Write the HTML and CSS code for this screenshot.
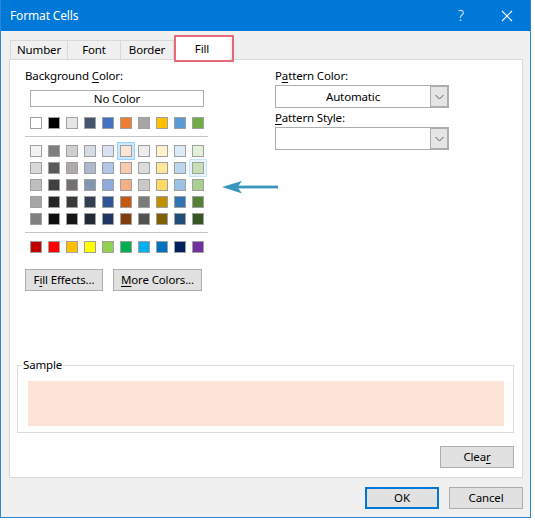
FILE: index.html
```html
<!DOCTYPE html>
<html lang="en">
<head>
<meta charset="utf-8">
<title>Format Cells</title>
<link rel="stylesheet" href="styles.css">
</head>
<body>
<div class="window">
  <div class="titlebar">
    <span class="title">Format Cells</span>
    <span class="cap-btn help">?</span>
    <span class="cap-btn">
      <svg width="12" height="12" viewBox="0 0 12 12"><path d="M1 1 L11 11 M11 1 L1 11" stroke="#fff" stroke-width="1.1" fill="none"/></svg>
    </span>
  </div>
  <div class="body">
    <div class="tabs">
      <div class="tab t-number">Number</div>
      <div class="tab t-font">Font</div>
      <div class="tab t-border">Border</div>
      <div class="tab sel">Fill</div>
    </div>
    <div class="panel">
      <div class="top">
        <div class="left">
          <div class="label">Background <u>C</u>olor:</div>
          <div class="nocolor">No Color</div>
          <div class="swrow first">
            <span class="sw" style="background:#ffffff"></span>
            <span class="sw" style="background:#000000"></span>
            <span class="sw" style="background:#e7e6e6"></span>
            <span class="sw" style="background:#44546a"></span>
            <span class="sw" style="background:#4472c4"></span>
            <span class="sw" style="background:#ed7d31"></span>
            <span class="sw" style="background:#a5a5a5"></span>
            <span class="sw" style="background:#ffc000"></span>
            <span class="sw" style="background:#5b9bd5"></span>
            <span class="sw" style="background:#70ad47"></span>
          </div>
          <div class="sep"></div>
          <div class="swrow tints">
            <span class="sw" style="background:#f2f2f2"></span>
            <span class="sw" style="background:#7f7f7f"></span>
            <span class="sw" style="background:#d0cece"></span>
            <span class="sw" style="background:#d6dce4"></span>
            <span class="sw" style="background:#d9e1f2"></span>
            <span class="sw selected" style="background:#fce4d6"></span>
            <span class="sw" style="background:#ededed"></span>
            <span class="sw" style="background:#fff2cc"></span>
            <span class="sw" style="background:#ddebf7"></span>
            <span class="sw" style="background:#e2efda"></span>

            <span class="sw" style="background:#d9d9d9"></span>
            <span class="sw" style="background:#595959"></span>
            <span class="sw" style="background:#aeaaaa"></span>
            <span class="sw" style="background:#adb9ca"></span>
            <span class="sw" style="background:#b4c6e7"></span>
            <span class="sw" style="background:#f8cbad"></span>
            <span class="sw" style="background:#dbdbdb"></span>
            <span class="sw" style="background:#ffe699"></span>
            <span class="sw" style="background:#bdd7ee"></span>
            <span class="sw hover" style="background:#c6e0b4"></span>

            <span class="sw" style="background:#bfbfbf"></span>
            <span class="sw" style="background:#404040"></span>
            <span class="sw" style="background:#767171"></span>
            <span class="sw" style="background:#8497b0"></span>
            <span class="sw" style="background:#8ea9db"></span>
            <span class="sw" style="background:#f4b084"></span>
            <span class="sw" style="background:#c9c9c9"></span>
            <span class="sw" style="background:#ffd966"></span>
            <span class="sw" style="background:#9bc2e6"></span>
            <span class="sw" style="background:#a9d08e"></span>

            <span class="sw" style="background:#a6a6a6"></span>
            <span class="sw" style="background:#262626"></span>
            <span class="sw" style="background:#3a3838"></span>
            <span class="sw" style="background:#333f4f"></span>
            <span class="sw" style="background:#305496"></span>
            <span class="sw" style="background:#c65911"></span>
            <span class="sw" style="background:#7b7b7b"></span>
            <span class="sw" style="background:#bf8f00"></span>
            <span class="sw" style="background:#2f75b5"></span>
            <span class="sw" style="background:#548235"></span>

            <span class="sw" style="background:#808080"></span>
            <span class="sw" style="background:#0d0d0d"></span>
            <span class="sw" style="background:#171616"></span>
            <span class="sw" style="background:#222b35"></span>
            <span class="sw" style="background:#203764"></span>
            <span class="sw" style="background:#833c0c"></span>
            <span class="sw" style="background:#525252"></span>
            <span class="sw" style="background:#806000"></span>
            <span class="sw" style="background:#1f4e78"></span>
            <span class="sw" style="background:#375623"></span>
          </div>
          <div class="sep"></div>
          <div class="swrow standard">
            <span class="sw" style="background:#c00000"></span>
            <span class="sw" style="background:#ff0000"></span>
            <span class="sw" style="background:#ffc000"></span>
            <span class="sw" style="background:#ffff00"></span>
            <span class="sw" style="background:#92d050"></span>
            <span class="sw" style="background:#00b050"></span>
            <span class="sw" style="background:#00b0f0"></span>
            <span class="sw" style="background:#0070c0"></span>
            <span class="sw" style="background:#002060"></span>
            <span class="sw" style="background:#7030a0"></span>
          </div>
          <div class="btns">
            <button class="btn b-fill">F<u>i</u>ll Effects...</button>
            <button class="btn b-more"><u>M</u>ore Colors...</button>
          </div>
        </div>
        <div class="right">
          <div class="label">P<u>a</u>ttern Color:</div>
          <div class="combo">
            <span class="combo-text">Automatic</span>
            <span class="combo-btn"><svg width="9" height="6" viewBox="0 0 9 6"><path d="M0.5 1 L4.5 5 L8.5 1" stroke="#5a5a5a" stroke-width="1" fill="none"/></svg></span>
          </div>
          <div class="label second"><u>P</u>attern Style:</div>
          <div class="combo">
            <span class="combo-text"></span>
            <span class="combo-btn"><svg width="9" height="6" viewBox="0 0 9 6"><path d="M0.5 1 L4.5 5 L8.5 1" stroke="#5a5a5a" stroke-width="1" fill="none"/></svg></span>
          </div>
        </div>
      </div>
      <svg class="arrow" width="58" height="15" viewBox="0 0 58 15">
        <rect x="14" y="5.6" width="42" height="2.8" fill="#3b96bf"/>
        <path d="M0 7 L20 1 L15.5 7 L20 13.5 Z" fill="#3b96bf"/>
      </svg>
      <fieldset class="sample">
        <legend>Sample</legend>
        <div class="fill"></div>
      </fieldset>
      <div class="clear-row">
        <button class="btn b-std">Clea<u>r</u></button>
      </div>
    </div>
    <div class="footer">
      <button class="btn b-std ok">OK</button>
      <button class="btn b-std">Cancel</button>
    </div>
  </div>
</div>
</body>
</html>
```

FILE: styles.css
```css
* { box-sizing: border-box; }

html, body {
  margin: 0;
  background: #ffffff;
}

body {
  font-family: "Noto Sans", "Segoe UI", sans-serif;
  font-size: 11.5px;
  letter-spacing: -0.15px;
  line-height: 16px;
  color: #000;
}

u { text-decoration: underline; text-underline-offset: 2px; }

.window {
  width: 531px;
  height: 518px;
  background: #f0f0f0;
  border: 1px solid #2a86d8;
  border-top: none;
  display: flex;
  flex-direction: column;
}

.titlebar {
  height: 31px;
  flex: none;
  background: #0078d7;
  color: #fff;
  display: flex;
  align-items: center;
  padding-left: 9px;
  font-size: 12px;
}

.title { flex: 1; }

.cap-btn {
  width: 46px;
  height: 31px;
  display: flex;
  align-items: center;
  justify-content: center;
}

.help {
  font-family: "Noto Sans", sans-serif;
  font-weight: 300;
  font-size: 14px;
  padding-top: 1px;
}

.body {
  flex: 1;
  display: flex;
  flex-direction: column;
  padding: 4px 7px 8px 8px;
}

.tabs {
  display: flex;
  align-items: flex-end;
  height: 24px;
  margin-left: 1px;
  flex: none;
}

.tab {
  height: 19px;
  border-top: 1px solid #d9d9d9;
  border-left: 1px solid #d9d9d9;
  background: #f0f0f0;
  display: flex;
  align-items: center;
  justify-content: center;
  padding-bottom: 1px;
}

.t-number { width: 57px; }
.t-font { width: 53px; }
.t-border { width: 54px; border-right: 1px solid #d9d9d9; }

.tab.sel {
  width: 56px;
  height: 25px;
  margin-bottom: -1px;
  background: #fff;
  border: none;
  align-items: flex-start;
  padding-top: 6px;
  position: relative;
  z-index: 2;
}

.tab.sel::after {
  content: "";
  position: absolute;
  left: 0;
  top: 0;
  width: 56px;
  height: 23px;
  border: 2px solid #e8697a;
}

.panel {
  flex: none;
  position: relative;
  background: #fff;
  border: 1px solid #d9d9d9;
  padding: 8px 0 9px 0;
}

.top { display: flex; }

.left {
  width: 265px;
  padding-left: 15px;
}

.right { width: 174px; }

.label { height: 16px; white-space: nowrap; }
.label.second { margin-top: 2px; }

.nocolor {
  margin: 6px 0 0 5px;
  width: 174px;
  height: 17px;
  border: 1px solid #adadad;
  background: #fff;
  text-align: center;
  line-height: 15px;
}

.swrow {
  display: grid;
  grid-template-columns: repeat(10, 12px);
  column-gap: 6px;
  row-gap: 5px;
  margin-left: 5px;
}

.swrow.first { margin-top: 10px; }
.swrow.tints { margin-top: 8px; }
.swrow.standard { margin-top: 8px; }

.sw {
  display: block;
  width: 12px;
  height: 12px;
  border: 1px solid #a0a0a0;
}

.sw.selected {
  box-shadow: 0 0 0 2px #cce8ff, 0 0 0 3px #99d1ff;
}

.sw.hover {
  box-shadow: 0 0 0 2px #e5f3ff, 0 0 0 3px #cce4f7;
}

.sep {
  margin-top: 7px;
  width: 183px;
  height: 1px;
  background: #c4c4c4;
}

.btns {
  margin-top: 16px;
  display: flex;
  gap: 10px;
}

.btn {
  height: 22px;
  border: 1px solid #adadad;
  background: #e1e1e1;
  font: inherit;
  letter-spacing: inherit;
  color: #000;
  padding: 0;
  margin: 0;
  line-height: 18px;
}

.b-fill { width: 78px; }
.b-more { width: 89px; }
.b-std { width: 74px; }

.ok { border: 2px solid #0078d7; }

.combo {
  margin-top: 1px;
  height: 23px;
  border: 1px solid #adadad;
  background: #fff;
  display: flex;
}

.combo-text {
  flex: 1;
  text-align: center;
  line-height: 21px;
}

.combo-btn {
  width: 18px;
  border: 1px solid #adadad;
  background: #e5e5e5;
  display: flex;
  align-items: center;
  justify-content: center;
}

.arrow {
  position: absolute;
  left: 212px;
  top: 120px;
}

.sample {
  margin: 66px 0 0 7px;
  width: 497px;
  border: 1px solid #dcdcdc;
  padding: 8px 4px 6px 4px;
  min-width: 0;
}

.sample legend {
  padding: 0 1px;
  margin: 0;
  line-height: 16px;
}

.fill {
  margin-left: 6px;
  width: 476px;
  height: 45px;
  background: #fce4d6;
}

.clear-row {
  display: flex;
  justify-content: flex-end;
  padding-right: 8px;
  margin-top: 13px;
}

.footer {
  display: flex;
  justify-content: flex-end;
  gap: 10px;
  margin-top: 9px;
}
```
